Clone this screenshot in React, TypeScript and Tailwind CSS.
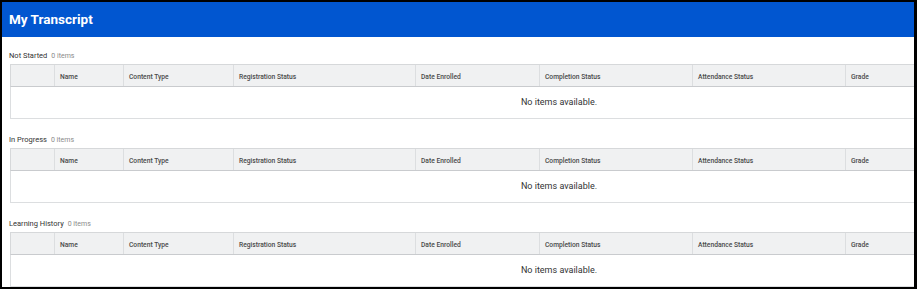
import React from "react";

const cols: { label: string; w: number }[] = [
  { label: "", w: 43 },
  { label: "Name", w: 69 },
  { label: "Content Type", w: 110 },
  { label: "Registration Status", w: 182 },
  { label: "Date Enrolled", w: 124 },
  { label: "Completion Status", w: 153 },
  { label: "Attendance Status", w: 153 },
  { label: "Grade", w: 262 },
];

function Section({ title }: { title: string }) {
  return (
    <div className="mb-[16px]">
      <div className="h-[10px] flex items-center gap-[4px] leading-none mb-[3px] ml-[7px]">
        <span className="text-[7.5px] text-[#333333]">{title}</span>
        <span className="text-[7px] text-[#8a8a8a]">0 items</span>
      </div>
      <div className="w-[1100px] ml-[8px]">
        <div className="flex h-[23px] bg-[#f0f1f2] border-t border-b border-l border-[#d6d8da] border-b-[#c9cbce]">
          {cols.map((c, i) => (
            <div
              key={i}
              style={{ width: c.w }}
              className={`shrink-0 flex items-center pt-[4px] pl-[5px] text-[6.7px] font-medium text-[#4a4a4a] whitespace-nowrap ${i > 0 ? "border-l border-[#dcdee0]" : ""}`}
            >
              {c.label}
            </div>
          ))}
        </div>
        <div className="h-[32px] border-l border-b border-[#dcdee0] flex items-center">
          <div className="w-[1096px] text-center text-[9px] text-[#333333]">No items available.</div>
        </div>
      </div>
    </div>
  );
}

export default function App() {
  return (
    <div
      className="w-[917px] h-[289px] bg-black pt-[2px] pl-[2px] pr-[3px] pb-[2px]"
      style={{ fontFamily: "Roboto, 'Liberation Sans', sans-serif" }}
    >
      <div className="w-full h-full bg-white overflow-hidden">
        <div className="h-[35px] bg-[#0156d0] flex items-center pl-[7px]">
          <span className="text-white font-bold text-[13.5px] leading-none">My Transcript</span>
        </div>
        <div className="pt-[14px]">
          <Section title="Not Started" />
          <Section title="In Progress" />
          <Section title="Learning History" />
        </div>
      </div>
    </div>
  );
}
